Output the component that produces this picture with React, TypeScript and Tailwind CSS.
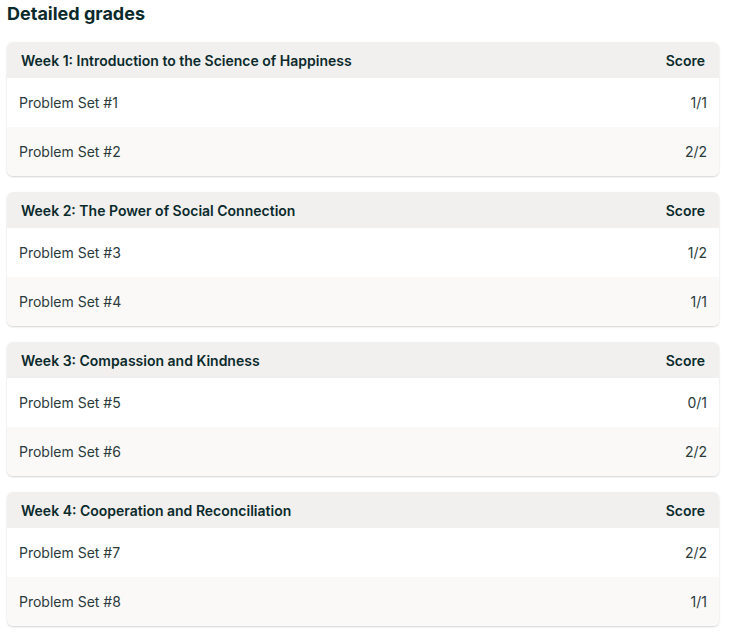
import React from "react"

const weeks = [
  {
    title: "Week 1: Introduction to the Science of Happiness",
    rows: [
      { name: "Problem Set #1", score: "1/1" },
      { name: "Problem Set #2", score: "2/2" },
    ],
  },
  {
    title: "Week 2: The Power of Social Connection",
    rows: [
      { name: "Problem Set #3", score: "1/2" },
      { name: "Problem Set #4", score: "1/1" },
    ],
  },
  {
    title: "Week 3: Compassion and Kindness",
    rows: [
      { name: "Problem Set #5", score: "0/1" },
      { name: "Problem Set #6", score: "2/2" },
    ],
  },
  {
    title: "Week 4: Cooperation and Reconciliation",
    rows: [
      { name: "Problem Set #7", score: "2/2" },
      { name: "Problem Set #8", score: "1/1" },
    ],
  },
]

export default function App() {
  return (
    <div className="min-h-screen bg-white pl-[7px] pr-[10px] pt-[2px] font-['Inter',sans-serif]">
      <h2 className="text-[18px] leading-[24px] font-bold text-[#0b2a2c] mb-[16px]">Detailed grades</h2>
      <div className="flex flex-col gap-[16px]">
        {weeks.map((week) => (
          <div
            key={week.title}
            className="rounded-[6px] overflow-hidden bg-white shadow-[0_1px_2px_rgba(0,0,0,0.18)]"
          >
            <div className="flex items-center justify-between h-[36px] bg-[#f1f0ee] pl-[14px] pr-[14px] text-[14px] font-semibold text-[#0b2a2c]">
              <span>{week.title}</span>
              <span>Score</span>
            </div>
            {week.rows.map((row, i) => (
              <div
                key={row.name}
                className={
                  "flex items-center justify-between h-[49px] pl-[12px] pr-[12px] text-[14px] text-[#2b3a3b] " +
                  (i % 2 === 1 ? "bg-[#faf9f8]" : "bg-white")
                }
              >
                <span>{row.name}</span>
                <span>{row.score}</span>
              </div>
            ))}
          </div>
        ))}
      </div>
    </div>
  )
}
